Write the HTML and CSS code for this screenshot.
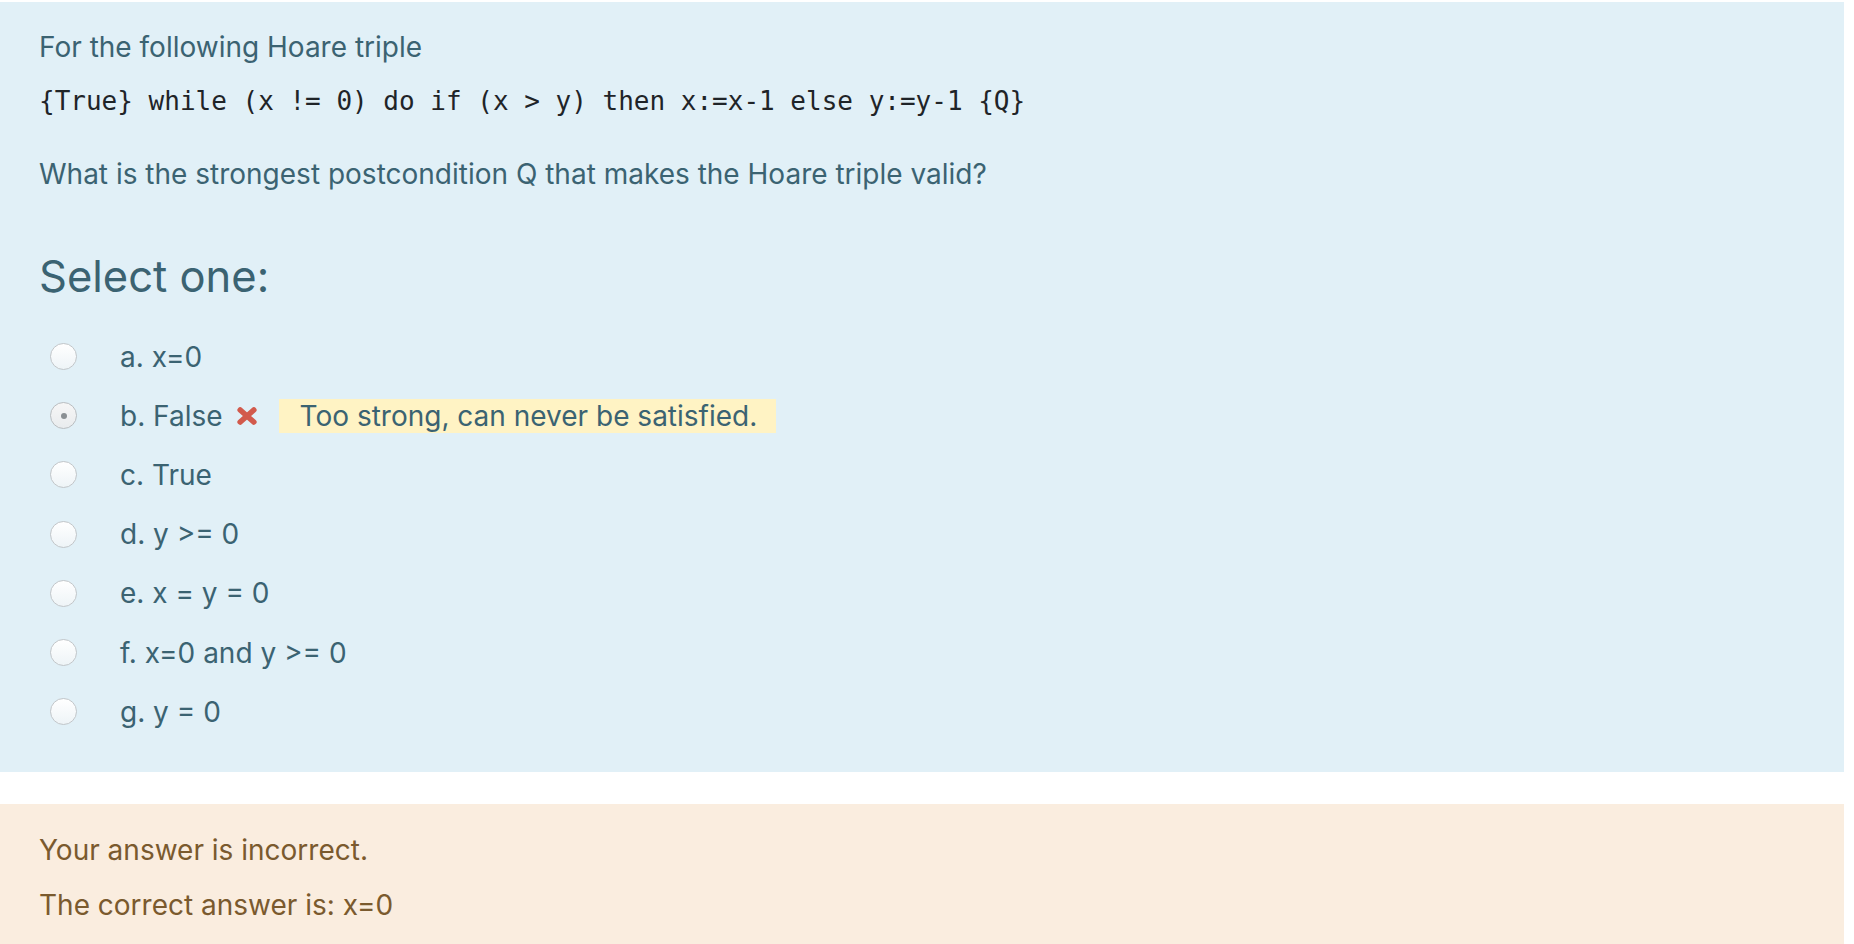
FILE: index.html
```html
<!DOCTYPE html>
<html>
<head>
<meta charset="utf-8">
<link rel="stylesheet" href="styles.css">
</head>
<body>
<div class="formulation">
  <p class="qtext first">For the following Hoare triple</p>
  <p class="code">{True} while (x != 0) do if (x &gt; y) then x:=x-1 else y:=y-1 {Q}</p>
  <p class="qtext question">What is the strongest postcondition Q that makes the Hoare triple valid?</p>
  <h2 class="prompt">Select one:</h2>
  <div class="answers">
    <div class="opt"><span class="radio"></span><span class="label">a. x=0</span></div>
    <div class="opt"><span class="radio checked"></span><span class="label">b. False</span><svg class="xmark" viewBox="0 0 22 20" width="22" height="20"><path d="M4.2 4 L17.8 16 M17.8 4 L4.2 16" stroke="#d25a4c" stroke-width="5.6" stroke-linecap="round" fill="none"/></svg><span class="feedback">Too strong, can never be satisfied.</span></div>
    <div class="opt"><span class="radio"></span><span class="label">c. True</span></div>
    <div class="opt"><span class="radio"></span><span class="label">d. y &gt;= 0</span></div>
    <div class="opt"><span class="radio"></span><span class="label">e. x = y = 0</span></div>
    <div class="opt"><span class="radio"></span><span class="label">f. x=0 and y &gt;= 0</span></div>
    <div class="opt"><span class="radio"></span><span class="label">g. y = 0</span></div>
  </div>
</div>
<div class="outcome">
  <p class="otext">Your answer is incorrect.</p>
  <p class="otext">The correct answer is: x=0</p>
</div>
</body>
</html>
```
FILE: styles.css
```css
html, body {
  margin: 0;
  padding: 0;
  background: #ffffff;
}
body {
  font-family: Inter, "Liberation Sans", sans-serif;
  width: 1854px;
}
.formulation {
  margin-top: 2px;
  width: 1844px;
  box-sizing: border-box;
  background: #e1f0f7;
  color: #3b6372;
  padding: 25px 39px 31px 39px;
}
p { margin: 0; }
.qtext {
  font-size: 28px;
  line-height: 40px;
}
.first { margin-bottom: 14px; }
.code {
  font-family: "DejaVu Sans Mono", "Liberation Mono", monospace;
  font-size: 26px;
  line-height: 40px;
  color: #1f2428;
}
.question { margin-top: 33px; }
.prompt {
  margin: 55px 0 24px 0;
  font-size: 43.5px;
  font-weight: 400;
  line-height: 54px;
}
.answers {
  display: flex;
  flex-direction: column;
}
.opt {
  height: 59.2px;
  display: flex;
  align-items: center;
  font-size: 28px;
  line-height: 40px;
}
.radio {
  width: 27px;
  height: 27px;
  box-sizing: border-box;
  border-radius: 50%;
  border: 1px solid #c2c6c9;
  background: linear-gradient(#ffffff, #eef4f7);
  margin-left: 11px;
  margin-right: 43px;
  position: relative;
  flex: none;
}
.radio.checked {
  background: linear-gradient(#f6f6f6, #e9ecee);
  border-color: #b9bdc0;
}
.radio.checked::after {
  content: "";
  position: absolute;
  left: 10px;
  top: 10px;
  width: 6px;
  height: 6px;
  border-radius: 50%;
  background: #8a8f93;
}
.xmark {
  margin-left: 13px;
  margin-right: 21px;
  flex: none;
}
.feedback {
  background: #fff3c4;
  padding: 0 19px 0 21px;
  line-height: 34px;
}
.outcome {
  margin-top: 32px;
  width: 1844px;
  box-sizing: border-box;
  background: #faeddf;
  color: #7a5a2e;
  padding: 26px 39px 20px 39px;
}
.otext {
  font-size: 28px;
  line-height: 40px;
}
.otext + .otext { margin-top: 15px; }
```
